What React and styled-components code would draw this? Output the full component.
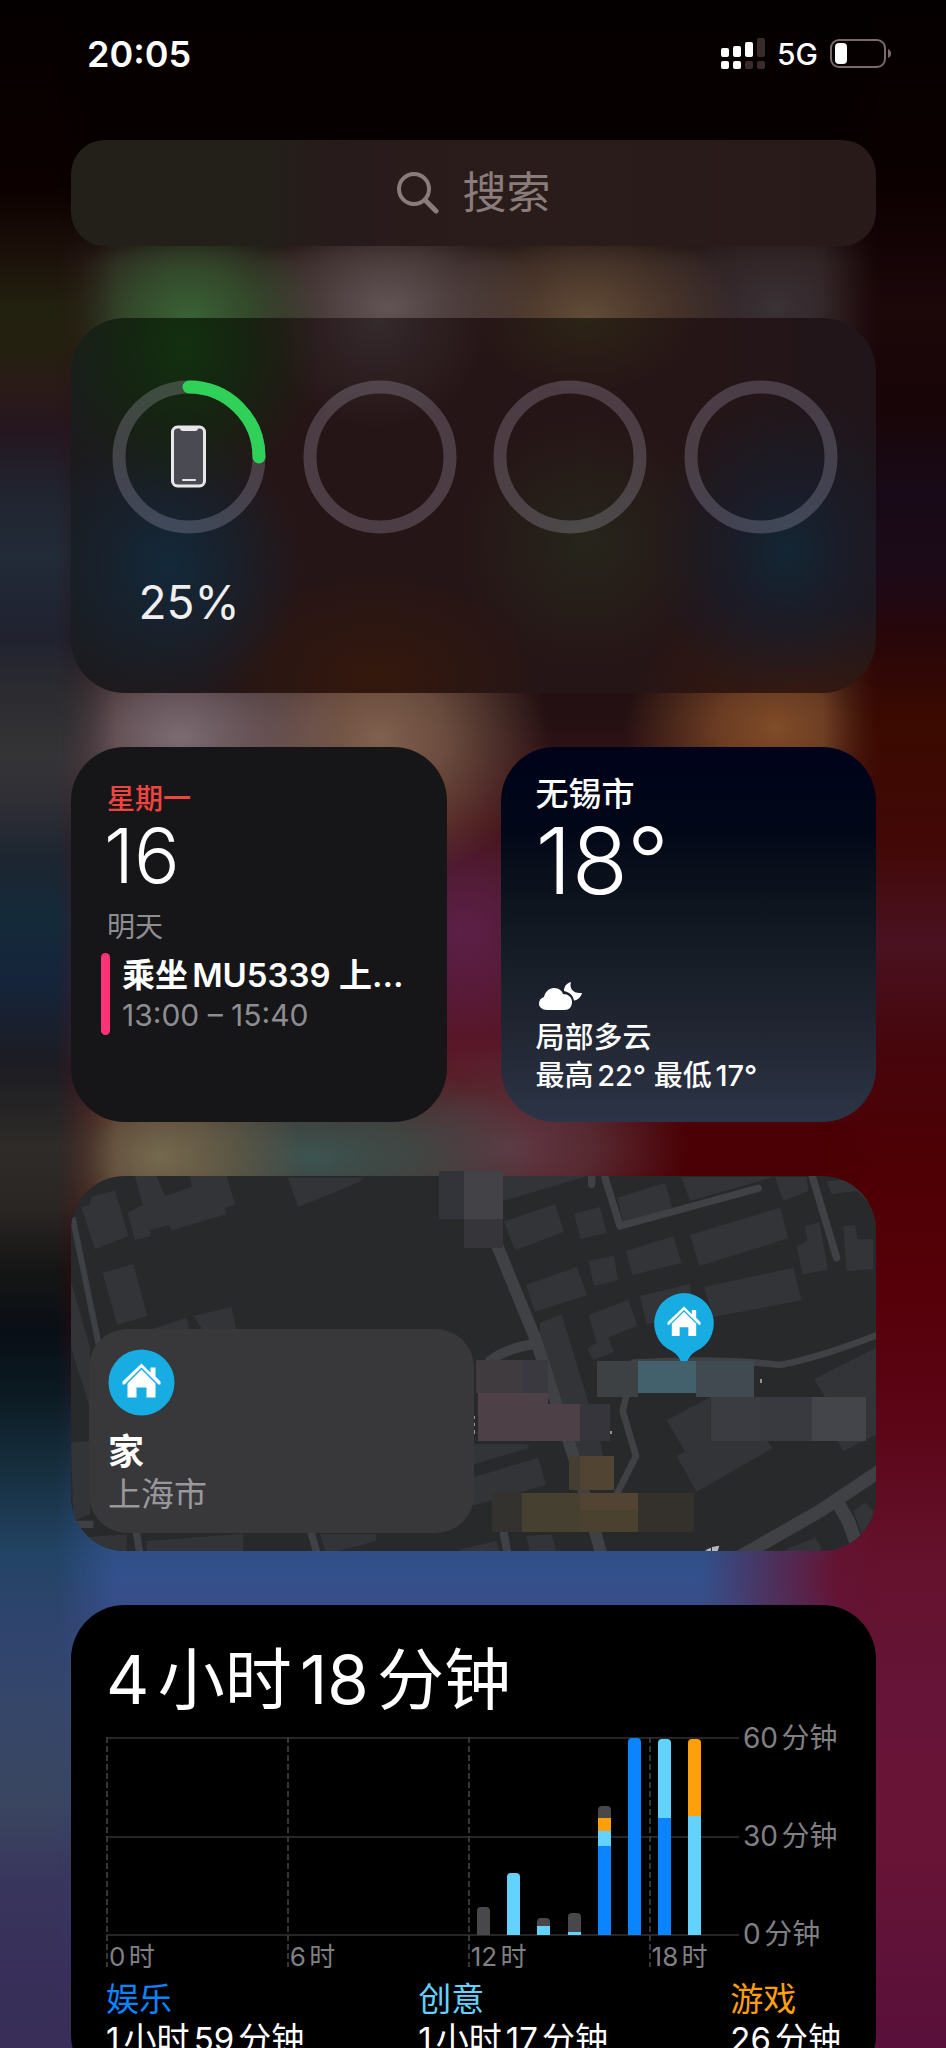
import React from 'react';
import styled, { createGlobalStyle } from 'styled-components';

const GlobalStyle = createGlobalStyle`
  *, *::before, *::after { box-sizing: border-box; }
  body { margin: 0; background: #050000; }
  h2, p { margin: 0; font-weight: 400; }
`;

const Screen = styled.main`
  height: 100vh;
  overflow: hidden;
  position: relative;
  isolation: isolate;
  color: #fff;
  font-family: Inter, "Noto Sans CJK SC", sans-serif;
  text-autospace: normal;
`;

/* Blurred home screen: edge columns are vertical ramps that fade towards the middle. */
const Wallpaper = styled.div`
  position: absolute;
  inset: 0;
  z-index: -1;
  background:
    radial-gradient(ellipse 14% 5% at 20% 15.5%, #3a6236 0%, #35552fcc 45%, transparent 100%),
    radial-gradient(ellipse 16% 5% at 41% 15%, #625455 0%, #5a4c4ccc 35%, transparent 100%),
    radial-gradient(ellipse 16% 5% at 62% 15.5%, #624c38 0%, #5a4433cc 35%, transparent 100%),
    radial-gradient(ellipse 15% 5% at 82% 15%, #3a3236 0%, #35292ccc 40%, transparent 100%),
    radial-gradient(ellipse 18% 6% at 19% 36%, #7c6c72 0%, #75646acc 35%, transparent 100%),
    radial-gradient(ellipse 18% 7% at 40% 36%, #80604e 0%, #7a5a48cc 40%, transparent 100%),
    radial-gradient(ellipse 16% 5% at 82% 35.5%, #804c28 0%, #7a4626cc 40%, transparent 100%),
    radial-gradient(ellipse 10% 5% at 49% 45.5%, #5c2048 0%, transparent 100%),
    radial-gradient(ellipse 15% 5% at 17% 56.5%, #75694e 0%, #6a6048cc 40%, transparent 100%),
    radial-gradient(ellipse 24% 5% at 33% 56.5%, #3c5450 0%, #3c4f4acc 45%, transparent 100%),
    radial-gradient(ellipse 19% 5% at 54% 56%, #623844 0%, #5a343ccc 45%, transparent 100%),
    radial-gradient(ellipse 26% 7% at 100% 77%, #641434 0%, #641434 45%, transparent 100%),
    linear-gradient(#050000 0%, #080000 10%, #2c1e1c 13%, #2a1616 17%, #241012 30%, #241012 35%, #45141a 40%, #4a1828 43%, #55162e 48%, #5a1726 52%, #4a0004 55%, #4a0004 64%, #2b4c80 74%, #33518c 77%, #3b4a84 80%, #38305a 100%);

  &::before, &::after { content: ""; position: absolute; top: 0; bottom: 0; }
  &::before {
    left: 0;
    width: 12%;
    background: linear-gradient(#050000 0%, #0c0000 9%, #1a0e08 12%, #22200f 15%, #24200f 17%, #2a1a18 19%, #251620 21%, #20242f 24%, #222b38 27%, #202230 31%, #2c2c30 34%, #343437 37%, #302f36 39%, #1c2530 42%, #142a3a 45%, #15243a 48%, #1c1c22 52%, #2e2b28 56%, #2a2624 59%, #151515 62%, #090f16 65%, #0b1a22 68%, #173040 72%, #234466 76%, #31446e 80%, #35466a 83%, #3a4660 88%, #38355c 92%, #38305a 96%, #382e58 100%);
    -webkit-mask-image: linear-gradient(to right, #000 50%, transparent);
    mask-image: linear-gradient(to right, #000 50%, transparent);
  }
  &::after {
    right: 0;
    width: 13%;
    background: linear-gradient(#050000 0%, #0c0000 9%, #1c0709 15%, #180507 20%, #180a18 24%, #1c0a18 28%, #28060a 31%, #3a0a00 35%, #420806 41%, #4a1220 46%, #46060c 51%, #4e0004 57%, #560009 63%, #5c0618 70%, #64122c 76%, #661438 83%, #681436 90%, #601238 95%, #58103a 100%);
    -webkit-mask-image: linear-gradient(to left, #000 55%, transparent);
    mask-image: linear-gradient(to left, #000 55%, transparent);
  }
`;

const StatusBar = styled.header`
  display: flex;
  align-items: center;
  justify-content: space-between;
  height: 108px;
  padding: 0 54px 0 87px;
`;

const Clock = styled.time`
  font-size: 36px;
  line-height: 44px;
  font-weight: 600;
`;

const StatusIcons = styled.div`
  display: flex;
  align-items: center;
  gap: 12px;
  font-size: 30px;
  line-height: 36px;
  font-weight: 500;

  svg { display: block; }
`;

const Content = styled.div`
  display: flex;
  flex-direction: column;
  gap: 54px;
  padding: 32px 70px 0 71px;
`;

const SearchBar = styled.label`
  display: flex;
  align-items: center;
  justify-content: center;
  gap: 24px;
  height: 106px;
  margin-bottom: 18px;
  border-radius: 34px;
  background: linear-gradient(to right, #222019 22%, #281b1b 34%, #2a1c1a 60%, #291a1a);
  color: #8a7c7b;

  svg { display: block; }
`;

const SearchInput = styled.input`
  width: 88px;
  padding: 0;
  border: 0;
  outline: 0;
  background: none;
  color: inherit;
  font: 400 44px/60px Inter, "Noto Sans CJK SC", sans-serif;

  &::placeholder { color: inherit; opacity: 1; }
`;

const Widget = styled.section`
  min-width: 0;
  min-height: 375px;
  border-radius: 54px;
`;

const BatteryWidget = styled(Widget)`
  display: flex;
  justify-content: space-between;
  padding: 62px 38px 0 41px;
  background:
    radial-gradient(ellipse 17% 40% at 14% 8%, #12300f 0%, #12280fcc 45%, transparent 100%),
    radial-gradient(ellipse 14% 30% at 38% 0%, #352a2c 0%, transparent 100%),
    radial-gradient(ellipse 17% 38% at 12% 66%, #13293a 0%, #152432cc 40%, transparent 100%),
    radial-gradient(ellipse 17% 42% at 89% 62%, #132634 0%, #181e2ccc 40%, transparent 100%),
    radial-gradient(ellipse 16% 34% at 64% 60%, #26251b 0%, transparent 100%),
    radial-gradient(ellipse 14% 20% at 64% 0%, #2c2416 0%, transparent 100%),
    radial-gradient(ellipse 20% 28% at 38% 96%, #34180c 0%, transparent 100%),
    radial-gradient(ellipse 20% 26% at 90% 100%, #3a180c 0%, transparent 100%),
    linear-gradient(to right, #1b1b1e, #261516 25%, #261516 75%, #20151a);
`;

const BatterySlot = styled.div`
  display: flex;
  flex-direction: column;
  align-items: center;
  gap: 38px;

  svg { display: block; }
`;

const BatteryLevel = styled.span`
  color: #f0eeee;
  font-size: 46px;
  line-height: 60px;
`;

const WidgetRow = styled.div`
  display: grid;
  grid-template-columns: 1fr 1fr;
  gap: 54px;
`;

const CalendarWidget = styled(Widget)`
  padding: 34px 30px;
  background: #161618;
`;

const DayLabel = styled.p`
  padding-left: 6px;
  font-size: 28px;
  line-height: 36px;
  font-weight: ${(p) => (p.$today ? 500 : 400)};
  color: ${(p) => (p.$today ? '#f0443f' : '#8e8e92')};
`;

const DayNumber = styled.p`
  padding: 2px 0 18px 3px;
  font-size: 76px;
  line-height: 72px;
  font-weight: 300;
`;

const Event = styled.div`
  display: flex;
  gap: 12px;
  padding-top: 8px;

  &::before {
    content: "";
    flex: none;
    width: 9px;
    border-radius: 5px;
    background: #ff3478;
  }
`;

const EventText = styled.div`
  min-width: 0;
  padding-top: 2px;
`;

const EventTitle = styled.p`
  overflow: hidden;
  white-space: nowrap;
  font-size: 33px;
  line-height: 40px;
  font-weight: 600;
`;

const EventTime = styled.p`
  white-space: nowrap;
  color: #8e8e92;
  font-size: 30px;
  line-height: 40px;
`;

const WeatherWidget = styled(Widget)`
  display: flex;
  flex-direction: column;
  padding: 25px 35px 27px;
  background: linear-gradient(#00031a 0%, #020718 22%, #0c121c 38%, #161c26 55%, #222733 78%, #2c3447 100%);

  svg { display: block; margin: auto 0 8px 3px; }
`;

const City = styled.h2`
  font-size: 33px;
  line-height: 44px;
  font-weight: 500;
`;

const Temperature = styled.p`
  font-size: 92px;
  line-height: 90px;
  font-weight: 300;
`;

const Forecast = styled.p`
  font-size: 29px;
  line-height: 38px;
  font-weight: 500;
  white-space: nowrap;
`;

const MapWidget = styled(Widget)`
  position: relative;
  display: flex;
  align-items: flex-end;
  padding: 18px;
`;

const MapLayer = styled.svg`
  position: absolute;
  inset: 0;
  width: 100%;
  height: 100%;
  border-radius: 54px;
  overflow: ${(p) => (p.$open ? 'visible' : 'hidden')};
`;

const PlaceCard = styled.div`
  position: relative;
  width: 50%;
  height: 204px;
  padding: 20px 19px;
  border-radius: 38px;
  background: #38383a;

  svg { display: block; }
`;

const PlaceName = styled.h2`
  padding-top: 14px;
  font-size: 36px;
  line-height: 44px;
  font-weight: 600;
`;

const PlaceCity = styled.p`
  color: #98989d;
  font-size: 33px;
  line-height: 40px;
`;

const UsageWidget = styled(Widget)`
  padding: 30px 35px;
  background: #000;
`;

const UsageTotal = styled.h2`
  white-space: nowrap;
  font-size: 67px;
  line-height: 90px;
`;

const Chart = styled.div`
  display: grid;
  grid-template-columns: 1fr 98px;
  column-gap: 4px;
  margin: 12px 0;
  color: #808084;
`;

const Plot = styled.svg`
  grid-area: 1 / 1;
  display: block;
  width: 100%;
  height: 230px;
`;

const HourLabels = styled.div`
  grid-area: 1 / 1;
  align-self: end;
  display: grid;
  grid-template-columns: 2fr 2fr 2fr 1fr;
  font-size: 26px;
  line-height: 20px;

  span { padding-left: 3px; white-space: nowrap; }
`;

const MinuteLabels = styled.div`
  grid-area: 1 / 2;
  display: flex;
  flex-direction: column;
  gap: 70px;
  margin-top: -13px;
  font-size: 28px;
  line-height: 28px;
  white-space: nowrap;
`;

const Categories = styled.dl`
  display: grid;
  grid-template-columns: 1fr 1fr auto;
  margin: 0;
  font-size: 33px;
  line-height: 40px;
  white-space: nowrap;

  dd { margin: 0; }
`;

const CategoryName = styled.dt`
  color: ${(p) => p.$color};
`;

const BLUE = '#0a84ff';
const CYAN = '#64d2ff';
const ORANGE = '#ff9f0a';
const GREY = '#48484a';

/* One entry per hour; segments run from the axis upwards, in plot pixels. */
const HOURS = [
  { hour: 12, parts: [[28, GREY]] },
  { hour: 13, parts: [[62, CYAN]] },
  { hour: 14, parts: [[9, CYAN], [8, GREY]] },
  { hour: 15, parts: [[3, CYAN], [19, GREY]] },
  { hour: 16, parts: [[89, BLUE], [15, CYAN], [13, ORANGE], [12, GREY]] },
  { hour: 17, parts: [[197, BLUE]] },
  { hour: 18, parts: [[117, BLUE], [79, CYAN]] },
  { hour: 19, parts: [[119, CYAN], [77, ORANGE]] },
];

const CATEGORIES = [
  { name: '娱乐', time: '1小时59分钟', color: BLUE },
  { name: '创意', time: '1小时17分钟', color: CYAN },
  { name: '游戏', time: '26分钟', color: ORANGE },
];

function Bar({ hour, parts }) {
  const x = 9 + Math.round(hour * 30.17);
  const total = parts.reduce((sum, [h]) => sum + h, 0);
  const id = `bar-${hour}`;
  let y = 198;
  return (
    <g clipPath={`url(#${id})`}>
      <clipPath id={id}>
        <path d={`M${x} 198v${-(total - 4)}q0-4 4-4h5q4 0 4 4v${total - 4}z`} />
      </clipPath>
      {parts.map(([h, fill], i) => {
        y -= h;
        return <rect key={i} x={x} y={y} width="13" height={h} fill={fill} />;
      })}
    </g>
  );
}

function UsageChart() {
  return (
    <Chart>
      <Plot viewBox="0 0 633 230" preserveAspectRatio="none" role="img" aria-label="每小时使用时间">
        <g stroke="#262628" strokeWidth="2">
          <path d="M0 1H633M0 100H633M0 198H633" />
          <path d="M1 0V230M182 0V230M363 0V230M544 0V230" stroke="#363638" strokeDasharray="6 3" />
        </g>
        {HOURS.map((h) => <Bar key={h.hour} {...h} />)}
      </Plot>
      <HourLabels>
        <span>0时</span><span>6时</span><span>12时</span><span>18时</span>
      </HourLabels>
      <MinuteLabels>
        <span>60分钟</span><span>30分钟</span><span>0分钟</span>
      </MinuteLabels>
    </Chart>
  );
}

function BatteryRing({ level }) {
  return (
    <svg width="154" height="154" viewBox="0 0 154 154" fill="none" strokeWidth="13">
      <circle cx="77" cy="77" r="70" stroke="#e8e0ff" strokeOpacity=".2" />
      {level && (
        <>
          <path d="M77 7A70 70 0 0 1 147 77" stroke="#30d158" strokeLinecap="round" />
          <rect x="60.5" y="47" width="32" height="59" rx="5" fill="#4a4b52" stroke="#e8e8ea" strokeWidth="3" />
          <path d="M68 47h18v1q0 3-3 3H71q-3 0-3-3z" fill="#e8e8ea" />
          <path d="M71 100h12" stroke="#e8e8ea" strokeWidth="2" strokeLinecap="round" />
        </>
      )}
    </svg>
  );
}

/* House drawn around 0,0 with a 37 x 34 extent. */
function House() {
  return (
    <g fill="#fff">
      <path d="M0-19L-19-1V2L-17 2L0-15L17 2L19 2V-1L14-6V-15H9V-10z" />
      <path d="M0-13L-14 1V15H-5V5H5V15H14V1z" />
    </g>
  );
}

function MapArt() {
  return (
    <MapLayer viewBox="0 0 805 375" preserveAspectRatio="xMidYMid slice" aria-hidden="true">
      <rect width="805" height="375" fill="#28292b" />
      <g transform="translate(-11 -15) scale(.3333)" fill="#333438">
        <path d="M65 140L90 130 92 108 165 88 205 225 105 265zM225 45H500L525 130 495 142 498 160 335 208 325 192 270 208 272 225 225 238 203 155 248 132zM683 50H908L900 62 715 138zM128 335L220 310 262 465 172 492zM275 505L380 470 388 505 428 507 400 465 515 438 530 510zM33 360L90 560V740L33 560zM33 845L90 840V1060L40 1080z" />
        <path d="M290 45L315 105 395 78 390 45z" fill="#28292b" />
        <path d="M38 170L118 560" stroke="#3d4145" strokeWidth="18" fill="none" />
        <path d="M50 1090H100M228 1110L240 1180M752 1110L772 1180" stroke="#404145" strokeWidth="22" fill="none" />
        <path d="M60 1130L200 1120V1180H90zM260 1140L550 1118V1180H260zM780 1120H948V1140L800 1180z" />
      </g>
      <g transform="translate(389 -15) scale(.3333)" fill="#333438">
        <path d="M-20 40H400L130 120H-20zM472 110L615 66 637 140 490 185zM665 48H940L690 120zM945 48H1040L1045 90 970 120zM1100 60L1250 50V150L1190 90 1115 100zM132 182L285 130 312 212 165 268zM342 158L420 138 440 215 362 234zM690 222L960 140 985 232 718 315zM498 270L640 226 665 305 518 342zM386 300L462 284 474 358 402 375zM198 372L350 318 382 402 225 452zM732 378L1000 320 1025 418 760 468zM1035 195L1078 184 1104 326 1028 340 1010 255 1042 240zM1150 196L1185 192 1192 235 1240 235V325L1160 330zM386 462L505 416 532 494 445 530 462 572 400 598 382 562 410 545zM540 405L690 368 700 470 560 490zM240 485L305 460 420 840 430 890H330L240 600zM1062 655L1250 560V820L1150 870 1128 830 1218 720 1095 708zM620 778L752 708V840H922L938 862 710 992 650 885 675 872zM35 850H200L208 860 35 912zM35 950L235 890 258 972 35 1035zM200 1125L275 1120 292 1180H210zM0 1165L110 1140 120 1180H0zM980 1165L1065 1130 1085 1160 1075 1180H980zM1180 1050L1215 1025 1250 1060V1120L1210 1130z" />
        <g fill="none" stroke="#3f4145" strokeLinecap="round" strokeLinejoin="round">
          <path d="M395 30V70M435 50L480 195 895 82M1055 40L1130 290" strokeWidth="22" />
          <path d="M110 250L225 530 345 900 430 1200" strokeWidth="36" />
          <path d="M225 550Q140 560 90 600" strokeWidth="30" />
          <path d="M520 605Q780 590 960 612 1080 590 1270 515M500 700L488 750 528 885 470 1000" strokeWidth="20" />
          <path d="M800 1210L1080 1050 1260 930M1130 1020L1165 1080 1190 1150" strokeWidth="40" />
          <path d="M130 1110L145 1190" strokeWidth="24" />
        </g>
        <path d="M735 1168l18-8v12zM756 1158l22-4-6 20h-16z" fill="#b8b8ba" />
      </g>
      <path d="M613 117a30.500 30.500 0 0 1 16 56q-10 4-13 13h-6q-3-9-13-13a30.500 30.500 0 0 1 16-56z" fill="#17ace2" />
      <g transform="translate(613 147) scale(.87)"><House /></g>
    </MapLayer>
  );
}

function MapBlocks() {
  return (
    <MapLayer $open viewBox="0 0 805 375" preserveAspectRatio="xMidYMid slice" aria-hidden="true">
      <path d="M368-5h25v48h-25z" fill="#33343a" />
      <path d="M393-5h39v48h-39z" fill="#434347" />
      <path d="M393 43h39v29h-39z" fill="#36363a" />
      <path d="M405 184h46v33h-46z" fill="#403b3f" />
      <path d="M451 184h26v33h-26z" fill="#39393f" />
      <path d="M405 217h72v11h32v37H407V217z" fill="#4d4147" />
      <path d="M509 228h30v37h-30z" fill="#36353b" />
      <path d="M526 185h41v36h-41z" fill="#3d4143" />
      <path d="M567 185h58v32h-58z" fill="#43616c" />
      <path d="M625 185h58v36h-58z" fill="#414a51" />
      <path d="M640 221h49v44h-49z" fill="#3a3c41" />
      <path d="M689 221h52v44h-52z" fill="#383a3f" />
      <path d="M741 221h54v44h-54z" fill="#43454a" />
      <path d="M498 280h11v34h-11z" fill="#453e32" />
      <path d="M509 280h34v34h-34z" fill="#514433" />
      <path d="M421 317h30v39h-30z" fill="#33322e" />
      <path d="M451 317h58v39h-58z" fill="#454030" />
      <path d="M509 317h58v17h-58z" fill="#524333" />
      <path d="M509 334h58v22h-58z" fill="#4b412f" />
      <path d="M567 317h56v39h-56z" fill="#34312d" />
      <g fill="#a08c92">
        <path d="M402 240h2v3h-2zM402 247h2v3h-2zM402 254h2v4h-2zM539 255h2v3h-2zM689 203h2v4h-2z" />
      </g>
    </MapLayer>
  );
}

function Signal() {
  const bars = [[0, 10], [12, 8], [24, 4], [36, 0]];
  return (
    <svg width="44" height="32" viewBox="0 0 44 32" role="img" aria-label="信号">
      {bars.map(([x, top], i) => (
        <g key={x}>
          <rect x={x} y={top} width="8" height={19 - top} rx="2" fill={i < 3 ? '#fff' : '#3a2b2b'} />
          <rect x={x} y="23" width="8" height="8" rx="2" fill={i < 2 ? '#fff' : '#3a2b2b'} />
        </g>
      ))}
    </svg>
  );
}

export default function App() {
  return (
    <Screen lang="zh-CN">
      <GlobalStyle />
      <Wallpaper />
      <StatusBar>
        <Clock>20:05</Clock>
        <StatusIcons>
          <Signal />
          <span>5G</span>
          <svg width="62" height="30" viewBox="0 0 62 30" role="img" aria-label="电量 25%">
            <rect x="1" y="1" width="54" height="27" rx="8" fill="none" stroke="#7a6a6a" strokeWidth="2" />
            <rect x="5" y="4" width="12" height="21" rx="4" fill="#fff" />
            <path d="M58 10q3 1 3 4.500t-3 4.500z" fill="#7a6a6a" />
          </svg>
        </StatusIcons>
      </StatusBar>

      <Content>
        <SearchBar>
          <svg width="42" height="42" viewBox="0 0 42 42" fill="none" stroke="currentColor" strokeLinecap="round" aria-hidden="true">
            <circle cx="17" cy="17" r="15" strokeWidth="4" />
            <path d="M28 28L39 39" strokeWidth="5" />
          </svg>
          <SearchInput type="text" placeholder="搜索" aria-label="搜索" />
        </SearchBar>

        <BatteryWidget>
          <BatterySlot>
            <BatteryRing level={25} />
            <BatteryLevel>25%</BatteryLevel>
          </BatterySlot>
          <BatterySlot><BatteryRing /></BatterySlot>
          <BatterySlot><BatteryRing /></BatterySlot>
          <BatterySlot><BatteryRing /></BatterySlot>
        </BatteryWidget>

        <WidgetRow>
          <CalendarWidget>
            <DayLabel $today>星期一</DayLabel>
            <DayNumber>16</DayNumber>
            <DayLabel>明天</DayLabel>
            <Event>
              <EventText>
                <EventTitle>乘坐MU5339 上…</EventTitle>
                <EventTime>13:00 – 15:40</EventTime>
              </EventText>
            </Event>
          </CalendarWidget>

          <WeatherWidget>
            <City>无锡市</City>
            <Temperature>18°</Temperature>
            <svg width="44" height="29" viewBox="0 0 44 29" fill="#fff" role="img" aria-label="局部多云">
              <path d="M8 28C3 28 0 25 0 21.500 0 18 2 16 5 15 6 10 10 6 15 6 20 6 23 9 24 12 29 12 33 15 33 20 33 25 30 28 26 28z" />
              <path d="M25 9C25 4 28 1 32 0 30 6 34 12 43 11 42 15 39 18 35 18.500 34 13 30 10 25 9z" />
            </svg>
            <Forecast>局部多云</Forecast>
            <Forecast>最高22° 最低17°</Forecast>
          </WeatherWidget>
        </WidgetRow>

        <MapWidget>
          <MapArt />
          <MapBlocks />
          <PlaceCard>
            <svg width="67" height="67" viewBox="-33.500 -33.500 67 67" aria-hidden="true">
              <circle r="33" fill="#17ace2" />
              <House />
            </svg>
            <PlaceName>家</PlaceName>
            <PlaceCity>上海市</PlaceCity>
          </PlaceCard>
        </MapWidget>

        <UsageWidget>
          <UsageTotal>4小时18分钟</UsageTotal>
          <UsageChart />
          <Categories>
            {CATEGORIES.map((c) => (
              <div key={c.name}>
                <CategoryName $color={c.color}>{c.name}</CategoryName>
                <dd>{c.time}</dd>
              </div>
            ))}
          </Categories>
        </UsageWidget>
      </Content>
    </Screen>
  );
}
